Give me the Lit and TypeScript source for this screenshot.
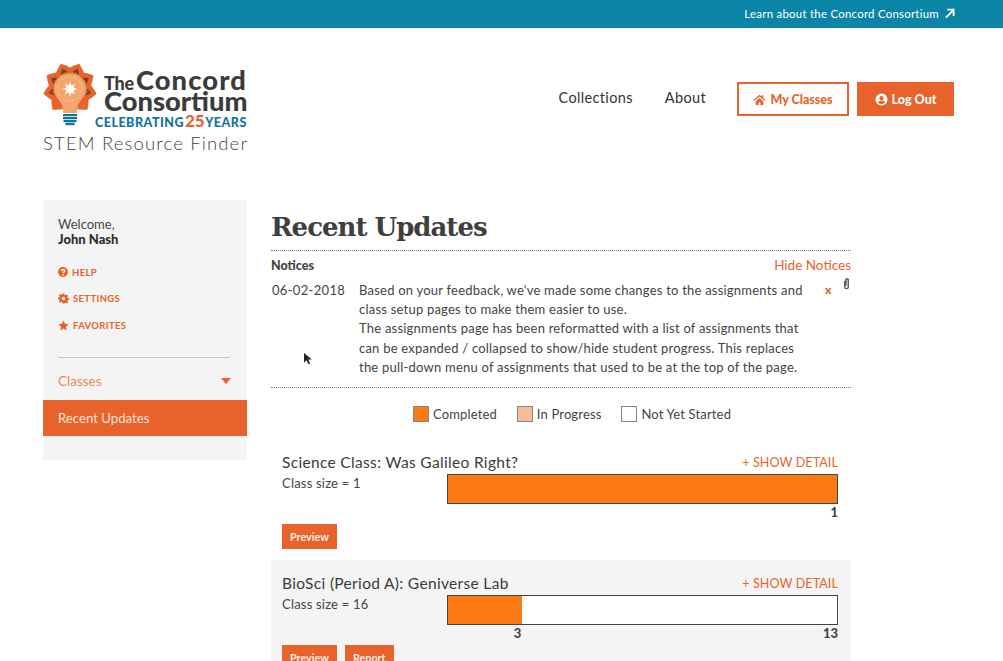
import { LitElement, html, css, svg } from "lit";
import { customElement } from "lit/decorators.js";

const petals = [1, 2, 3, 4, 5, 6, 7, 8].map((i) => i * 40);

const logoMark = html`<svg class="mark" viewBox="0 0 54 66" width="54" height="66" aria-hidden="true">
  ${petals.map(
    (a) => svg`<path transform="rotate(${a} 27 27)" d="M27 54 C16 46 12 36 16 27 L38 27 C42 36 38 46 27 54Z" fill="#e8632b"/>`
  )}
  <circle cx="27" cy="27" r="17" fill="#e8632b"/>
  ${[20, 60, 100, 260, 300, 340].map(
    (a) => svg`<path transform="rotate(${a} 27 27)" d="M24 10 L27 6 L30 10 M25.500 10 L27 8 L28.500 10" fill="none" stroke="#3a3a3a" stroke-width=".9"/>`
  )}
  <path d="M27 11.500 C36 11.500 43 18 43 27 C43 34 37 38 35 43 L33.500 51 L20.500 51 L19 43 C17 38 11 34 11 27 C11 18 18 11.500 27 11.500Z" fill="#f0a66c"/>
  <circle cx="27" cy="27" r="12" fill="none" stroke="#fbe3d0" stroke-width="1" stroke-dasharray="1 2"/>
  <path d="M27 19 L28.300 24 L32.500 21.500 L30 25.700 L35 27 L30 28.300 L32.500 32.500 L28.300 30 L27 35 L25.700 30 L21.500 32.500 L24 28.300 L19 27 L24 25.700 L21.500 21.500 L25.700 24Z" fill="#fff"/>
  <circle cx="27" cy="27" r="4" fill="#fff"/>
  <g fill="#0f7499"><rect x="20" y="52" width="14" height="2.200"/><rect x="20" y="55" width="14" height="2.200"/><rect x="20.500" y="58" width="13" height="2.200"/><rect x="22.500" y="60.800" width="9" height="2.400"/></g>
</svg>`;

const iHome = html`<svg class="ico" viewBox="0 0 24 24" width="13" height="13"><path fill="currentColor" d="M12 3 1 12.500 2.600 14.400 12 6.400l9.400 8 1.600-1.900-4-3.400V4h-3v2.600zM5 15v7h5.500v-5h3v5H19v-7l-7-6z"/></svg>`;
const iUser = html`<svg class="ico" viewBox="0 0 24 24" width="13" height="13"><path fill="currentColor" fill-rule="evenodd" d="M12 1a11 11 0 1 0 0 22 11 11 0 0 0 0-22zm0 4.500a4 4 0 1 1 0 8 4 4 0 0 1 0-8zm0 15a8.500 8.500 0 0 1-6.400-2.900c.7-1.900 2.200-3.100 4-3.100h4.800c1.800 0 3.300 1.200 4 3.100A8.500 8.500 0 0 1 12 20.500z"/></svg>`;
const iHelp = html`<svg class="ico" viewBox="0 0 24 24" width="10" height="10"><circle cx="12" cy="12" r="12" fill="currentColor"/><path fill="none" stroke="#f4f4f4" stroke-width="3.400" d="M8 9.500C8 7 10 6 12 6s4 1.200 4 3.500c0 3-4 3-4 5.500"/><rect x="10.200" y="16.800" width="3.600" height="3.400" fill="#f4f4f4"/></svg>`;
const iGear = html`<svg class="ico" viewBox="0 0 24 24" width="11" height="11"><path fill="currentColor" fill-rule="evenodd" d="M10 1h4l.6 3.200 1.800.8 2.800-1.800 2.800 2.800-1.800 2.800.8 1.800 3 .4v4l-3 .6-.8 1.800 1.800 2.800-2.800 2.800-2.800-1.800-1.800.8L14 23h-4l-.6-3-1.800-.8-2.800 1.800-2.800-2.800 1.800-2.800-.8-1.800L0 14v-4l3-.6.8-1.800L2 4.800 4.800 2l2.800 1.800 1.800-.8zM12 8a4 4 0 1 0 0 8 4 4 0 0 0 0-8z"/></svg>`;
const iStar = html`<svg class="ico" viewBox="0 0 24 24" width="11" height="11"><path fill="currentColor" d="M12 1l3.400 7.300 7.600 1-5.600 5.400 1.500 8L12 18.800 5.100 22.700l1.500-8L1 9.300l7.600-1z"/></svg>`;

interface ClassRow { name: string; size: number; done: number; labels: { text: string; pct: number }[]; report: boolean; alt: boolean; }

const rows: ClassRow[] = [
  { name: "Science Class: Was Galileo Right?", size: 1, done: 100, labels: [{ text: "1", pct: 100 }], report: false, alt: false },
  { name: "BioSci (Period A): Geniverse Lab", size: 16, done: 19, labels: [{ text: "3", pct: 19 }, { text: "13", pct: 100 }], report: true, alt: true },
];

@customElement("app-root")
export class AppRoot extends LitElement {
  static styles = css`
    :host { display: block; height: 661px; overflow: hidden; position: relative; background: #fff; color: #444; font-family: Lato, "Open Sans", sans-serif; font-size: 13.500px; }
    * { box-sizing: border-box; }
    a { color: inherit; text-decoration: none; }
    .top { height: 28px; background: #0b85a6; color: #fff; display: flex; align-items: center; justify-content: flex-end; gap: 5px; padding: 0 48px 2px 0; font-size: 11.400px; letter-spacing: .27px; }
    .head { display: flex; justify-content: space-between; align-items: flex-start; padding: 34px 49px 0 43px; height: 172px; }
    .logo { width: 204px; }
    .brand { display: flex; gap: 7px; height: 69px; }
    .mark { flex: none; }
    .names { display: flex; flex-direction: column; padding-top: 7px; }
    .n1 { font-weight: 900; color: #3b3b3b; font-size: 27.300px; line-height: 21px; height: 21px; white-space: nowrap; }
    .c1 { letter-spacing: 1.100px; }
    .the { font-size: 18px; letter-spacing: -.2px; margin-right: 2px; }
    .cel { font-weight: 900; font-size: 12.500px; color: #0f7499; letter-spacing: .5px; word-spacing: -2.500px; white-space: nowrap; line-height: 14px; margin: 3px 0 0 -9px; }
    .cel b { color: #e8632b; font-size: 17px; font-weight: 900; letter-spacing: 0; line-height: 14px; }
    .stem { font-size: 18.500px; letter-spacing: 1.150px; color: #444; font-weight: 300; line-height: 24px; white-space: nowrap; }
    .nav { display: flex; align-items: center; margin-top: 20px; font-size: 14.500px; }
    .nav a.t { letter-spacing: .35px; color: #333; margin-bottom: 4px; }
    .nav a.t + a.t { margin-left: 32px; }
    .btn { display: flex; align-items: center; justify-content: center; gap: 4px; height: 34px; font-weight: 900; font-size: 12.500px; border: 2px solid #e8632b; color: #e8632b; }
    .mine { width: 112px; margin-left: 31px; }
    .out { width: 97px; margin-left: 8px; background: #e8632b; color: #fff; }
    .body { display: grid; grid-template-columns: 204px 580px; gap: 24px; padding-left: 43px; align-items: start; }
    .side { background: #f4f4f4; height: 260px; padding-top: 17px; }
    .welcome { padding-left: 15px; line-height: 15px; font-size: 13px; }
    .welcome strong { display: block; font-weight: 900; color: #2f2f2f; }
    .links { list-style: none; margin: 19px 0 0; padding: 0 0 0 15px; display: flex; flex-direction: column; gap: 14px; color: #e8632b; font-size: 9.500px; font-weight: 700; letter-spacing: .35px; }
    .links li { display: flex; align-items: center; gap: 4px; height: 12.600px; }
    .ico { flex: none; display: block; }
    .rule { height: 0; border-top: 1px solid #c9c9c9; margin: 25px 17px 0 15px; }
    .cl { display: flex; justify-content: space-between; align-items: center; color: #e98a5c; padding: 4px 16px 0 15px; height: 42px; font-size: 13.500px; }
    .tri { width: 0; height: 0; border: 5.500px solid transparent; border-top: 6px solid #e8632b; border-bottom: 0; }
    .cur { height: 36px; background: #e8632b; color: #fbe3d7; padding-left: 15px; display: flex; align-items: center; font-size: 13.200px; }
    h1 { margin: 0; font-family: "DejaVu Serif", serif; font-weight: 700; font-size: 26px; line-height: 54px; color: #3f3f3f; letter-spacing: -1px; height: 50px; }
    .notices { border-top: 1px dotted #777; border-bottom: 1px dotted #777; height: 138px; padding-top: 7px; position: relative; }
    .nh { display: flex; justify-content: space-between; line-height: 14px; }
    .nh strong { font-weight: 900; font-size: 12.500px; padding-top: 1px; }
    .nh a { color: #e8632b; font-size: 13.500px; }
    .nb { display: grid; grid-template-columns: 88px 465px 1fr; margin-top: 8px; line-height: 19.200px; font-size: 13px; letter-spacing: .22px; }
    .msg { padding-right: 15px; }
    .date { padding-left: 1px; letter-spacing: .32px; }
    .x { color: #e8632b; font-weight: 900; font-size: 12px; display: flex; justify-content: space-between; align-items: flex-start; padding: 1px 1px 0 1px; line-height: 16px; }
    .clip { margin-top: -4px; }
    .legend { display: flex; justify-content: center; gap: 20px; height: 53px; align-items: center; padding: 0 0 2px 22px; }
    .legend span { display: flex; align-items: center; gap: 4px; font-size: 13px; letter-spacing: .15px; }
    .sw { width: 16px; height: 16px; border: 1px solid #888; display: block; }
    .s1 { background: #fb7a14; } .s2 { background: #f5bd9a; } .s3 { background: #fff; }
    .cls { padding: 11px 13px 0 11px; height: 119px; }
    .cls.alt { background: #f4f4f4; height: 120px; padding-top: 13px; }
    .row1 { display: flex; justify-content: space-between; align-items: center; height: 20px; }
    .name { font-size: 15.500px; letter-spacing: .33px; color: #3b3b3b; }
    .detail { color: #e8632b; font-size: 12.500px; letter-spacing: .12px; }
    .row2 { display: grid; grid-template-columns: 165px 1fr; height: 50px; margin-top: 2px; }
    .size { font-size: 13px; line-height: 17px; padding-top: 1px; letter-spacing: .2px; }
    .bar { height: 30px; border: 1px solid #444; background: #fff; }
    .fill { height: 100%; background: #fb7a14; }
    .nums { position: relative; height: 17px; font-weight: 900; font-size: 13px; line-height: 17px; }
    .nums i { position: absolute; font-style: normal; transform: translateX(-100%); }
    .acts { display: flex; gap: 8px; }
    .pb { height: 25px; background: #e8632b; color: #fbeee7; font-weight: 700; font-size: 10.800px; display: flex; align-items: center; padding: 0 8px; }
    .pointer { position: absolute; left: 303px; top: 352px; }
  `;

  render() {
    return html`
      <div class="top"><a href="#">Learn about the Concord Consortium</a>
        <svg viewBox="0 0 12 12" width="11" height="11"><path d="M2 10.500 10 2.500M3.500 1.800h7v7" fill="none" stroke="#fff" stroke-width="2"/></svg>
      </div>
      <header class="head">
        <div class="logo">
          <div class="brand">
            ${logoMark}
            <div class="names">
              <div class="n1"><span class="the">The</span><span class="c1">Concord</span></div>
              <div class="n1">Consortium</div>
              <div class="cel">CELEBRATING <b>25</b> YEARS</div>
            </div>
          </div>
          <div class="stem">STEM Resource Finder</div>
        </div>
        <nav class="nav">
          <a class="t" href="#">Collections</a>
          <a class="t" href="#">About</a>
          <a class="btn mine" href="#">${iHome}My Classes</a>
          <a class="btn out" href="#">${iUser}Log Out</a>
        </nav>
      </header>
      <div class="body">
        <aside class="side">
          <div class="welcome">Welcome,<strong>John Nash</strong></div>
          <ul class="links">
            <li>${iHelp}<a href="#">HELP</a></li>
            <li>${iGear}<a href="#">SETTINGS</a></li>
            <li>${iStar}<a href="#">FAVORITES</a></li>
          </ul>
          <div class="rule"></div>
          <div class="cl"><span>Classes</span><i class="tri"></i></div>
          <div class="cur">Recent Updates</div>
        </aside>
        <main>
          <h1>Recent Updates</h1>
          <section class="notices">
            <div class="nh"><strong>Notices</strong><a href="#">Hide Notices</a></div>
            <div class="nb">
              <div class="date">06-02-2018</div>
              <div class="msg">Based on your feedback, we've made some changes to the assignments and class setup pages to make them easier to use.<br>The assignments page has been reformatted with a list of assignments that can be expanded / collapsed to show/hide student progress. This replaces the pull-down menu of assignments that used to be at the top of the page.</div>
              <div class="x"><span>x</span>
                <svg class="clip" viewBox="0 0 6 10" width="7" height="12"><path d="M1.500 2.500v5a1.500 1.500 0 0 0 3 0v-6a1 1 0 0 0-2 0v5" fill="none" stroke="#555" stroke-width="1.200"/></svg>
              </div>
            </div>
          </section>
          <div class="legend">
            <span><i class="sw s1"></i>Completed</span>
            <span><i class="sw s2"></i>In Progress</span>
            <span><i class="sw s3"></i>Not Yet Started</span>
          </div>
          ${rows.map(
            (r) => html`<section class="cls ${r.alt ? "alt" : ""}">
              <div class="row1"><span class="name">${r.name}</span><a class="detail" href="#">+ SHOW DETAIL</a></div>
              <div class="row2">
                <div class="size">Class size = ${r.size}</div>
                <div>
                  <div class="bar"><div class="fill" style="width:${r.done}%"></div></div>
                  <div class="nums">${r.labels.map((l) => html`<i style="left:${l.pct}%">${l.text}</i>`)}</div>
                </div>
              </div>
              <div class="acts"><a class="pb" href="#">Preview</a>${r.report ? html`<a class="pb" href="#">Report</a>` : ""}</div>
            </section>`
          )}
        </main>
      </div>
      <svg class="pointer" viewBox="0 0 10 16" width="9" height="14"><path d="M1 1v11l3-2.600 2 4.600 2-1-2-4.400h4z" fill="#222"/></svg>
    `;
  }
}
